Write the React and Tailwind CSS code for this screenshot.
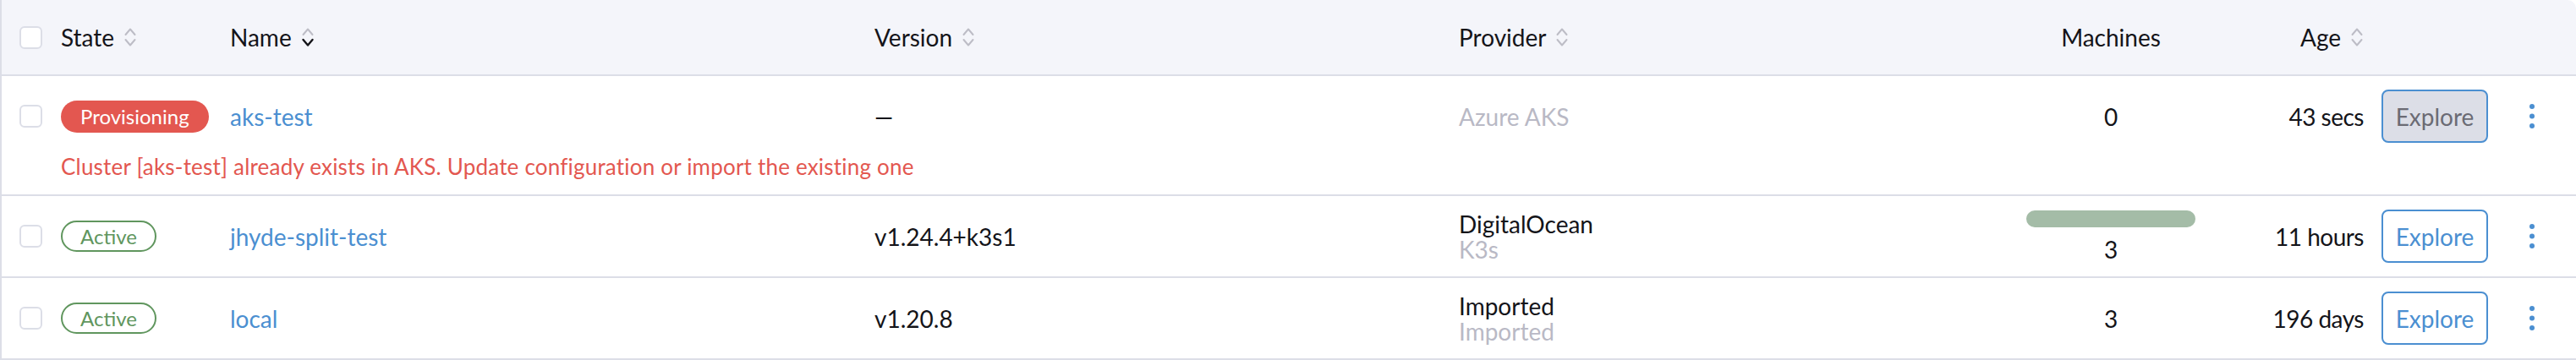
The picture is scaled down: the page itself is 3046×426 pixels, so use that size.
import React from "react";

const GRID =
  "grid grid-cols-[70px_200px_762px_691px_671px_200px_199px_21px_126px_1fr] items-center";

function SortIcon({ active }) {
  return (
    <svg width="16" height="26" viewBox="0 0 16 26" className="ml-[11px] shrink-0">
      <polyline points="2.5,10 8,3.5 13.5,10" fill="none" stroke="#bdbdc6" strokeWidth="2" strokeLinecap="round" strokeLinejoin="round" />
      <polyline
        points="2.5,16 8,22.5 13.5,16"
        fill="none"
        stroke={active ? "#141419" : "#bdbdc6"}
        strokeWidth={active ? "2.4" : "2"}
        strokeLinecap="round"
        strokeLinejoin="round"
      />
    </svg>
  );
}

function Checkbox() {
  return <div className="ml-[21px] w-[27px] h-[27px] rounded-[6px] border-2 border-[#dcdee7] bg-white" />;
}

function Dots() {
  return (
    <div className="flex justify-center">
      <svg width="8" height="34" viewBox="0 0 8 34">
        <circle cx="4" cy="5" r="3" fill="#4b8fd1" />
        <circle cx="4" cy="16.5" r="3" fill="#4b8fd1" />
        <circle cx="4" cy="28" r="3" fill="#4b8fd1" />
      </svg>
    </div>
  );
}

function Explore({ disabled }) {
  return (
    <button
      className={
        "w-[126px] h-[63px] rounded-[8px] border-2 border-[#4b8fd1] text-[28px] leading-[30px] " +
        (disabled ? "bg-[#dcdee7] text-[#6b6b74]" : "bg-white text-[#4b8fd1]")
      }
    >
      Explore
    </button>
  );
}

function Badge({ kind, children }) {
  if (kind === "error") {
    return (
      <span className="inline-flex items-center h-[38px] px-[23px] rounded-full bg-[#e35750] text-white text-[24px] leading-[28px]">
        {children}
      </span>
    );
  }
  return (
    <span className="inline-flex items-center h-[37px] px-[21px] rounded-full border-2 border-[#60965e] text-[#60965e] text-[24px] leading-[28px]">
      {children}
    </span>
  );
}

function HeaderCell({ label, sort, active, className = "" }) {
  return (
    <div className={"flex items-center " + className}>
      <span>{label}</span>
      {sort && <SortIcon active={active} />}
    </div>
  );
}

export default function App() {
  const rows = [
    {
      state: "Provisioning",
      kind: "error",
      name: "aks-test",
      version: "—",
      provider: "Azure AKS",
      providerMuted: true,
      sub: null,
      machines: "0",
      bar: false,
      age: "43 secs",
      disabled: true,
      error: "Cluster [aks-test] already exists in AKS. Update configuration or import the existing one",
    },
    {
      state: "Active",
      kind: "ok",
      name: "jhyde-split-test",
      version: "v1.24.4+k3s1",
      provider: "DigitalOcean",
      sub: "K3s",
      machines: "3",
      bar: true,
      age: "11 hours",
    },
    {
      state: "Active",
      kind: "ok",
      name: "local",
      version: "v1.20.8",
      provider: "Imported",
      sub: "Imported",
      machines: "3",
      bar: false,
      age: "196 days",
    },
  ];

  return (
    <div className="w-[3046px] h-[426px] bg-white font-[family-name:Lato,'Liberation_Sans',sans-serif] text-[#141419] text-[28px] leading-[30px] border-l-2 border-[#dcdee7] overflow-hidden">
      <div className={GRID + " h-[90px] bg-[#f4f5fa] border-b-2 border-[#dcdee7] rounded-tr-[10px]"}>
        <Checkbox />
        <HeaderCell label="State" sort />
        <HeaderCell label="Name" sort active />
        <HeaderCell label="Version" sort />
        <HeaderCell label="Provider" sort />
        <HeaderCell label="Machines" className="justify-center" />
        <HeaderCell label="Age" sort className="justify-end" />
        <div />
        <div />
        <div />
      </div>

      {rows.map((r, i) => (
        <div key={i} className="border-b-2 border-[#dcdee7]">
          <div className={GRID + " pt-[16px] " + (r.error ? "pb-0" : "pb-[16px]")}>
            <Checkbox />
            <div>
              <Badge kind={r.kind}>{r.state}</Badge>
            </div>
            <div className="text-[#4b8fd1]">{r.name}</div>
            <div>{r.version}</div>
            <div className="flex flex-col">
              <span className={r.providerMuted ? "text-[#b9b9c5]" : ""}>{r.provider}</span>
              {r.sub && <span className="text-[#b9b9c5]">{r.sub}</span>}
            </div>
            <div className="flex flex-col items-center">
              {r.bar && <div className="w-[200px] h-[20px] rounded-full bg-[#a4bca7] mb-[11px]" />}
              <span>{r.machines}</span>
            </div>
            <div className="text-right tracking-[-0.5px]">{r.age}</div>
            <div />
            <Explore disabled={r.disabled} />
            <Dots />
          </div>
          {r.error && (
            <div className="pl-[70px] pt-[10px] pb-[15px] text-[26px] leading-[36px] tracking-[0.2px] text-[#e35750]">
              {r.error}
            </div>
          )}
        </div>
      ))}
    </div>
  );
}
